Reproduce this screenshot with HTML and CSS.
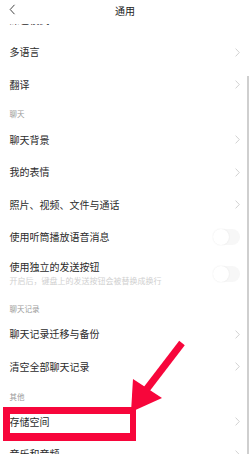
FILE: index.html
```html
<!DOCTYPE html>
<html lang="zh-CN">
<head>
<meta charset="utf-8">
<title>通用</title>
<link rel="stylesheet" href="styles.css">
</head>
<body>
<div class="screen">
  <header class="topbar">
    <svg class="back" width="7" height="11" viewBox="0 0 7 11"><path d="M5.5 0.8 L1.2 5.5 L5.5 10.2" fill="none" stroke="#444" stroke-width="1"/></svg>
    <div class="title">通用</div>
  </header>

  <main class="list">
    <div class="row"><span class="label">深色模式</span></div>
    <div class="row"><span class="label">多语言</span><svg class="chev" width="5" height="9" viewBox="0 0 5 9"><path d="M0.6 0.6 L4.3 4.5 L0.6 8.4" fill="none" stroke="#cdcdcd" stroke-width="0.9"/></svg></div>
    <div class="row"><span class="label">翻译</span><svg class="chev" width="5" height="9" viewBox="0 0 5 9"><path d="M0.6 0.6 L4.3 4.5 L0.6 8.4" fill="none" stroke="#cdcdcd" stroke-width="0.9"/></svg></div>

    <div class="section">聊天</div>
    <div class="row"><span class="label">聊天背景</span><svg class="chev" width="5" height="9" viewBox="0 0 5 9"><path d="M0.6 0.6 L4.3 4.5 L0.6 8.4" fill="none" stroke="#cdcdcd" stroke-width="0.9"/></svg></div>
    <div class="row"><span class="label">我的表情</span><svg class="chev" width="5" height="9" viewBox="0 0 5 9"><path d="M0.6 0.6 L4.3 4.5 L0.6 8.4" fill="none" stroke="#cdcdcd" stroke-width="0.9"/></svg></div>
    <div class="row"><span class="label">照片、视频、文件与通话</span><svg class="chev" width="5" height="9" viewBox="0 0 5 9"><path d="M0.6 0.6 L4.3 4.5 L0.6 8.4" fill="none" stroke="#cdcdcd" stroke-width="0.9"/></svg></div>
    <div class="row"><span class="label">使用听筒播放语音消息</span><span class="toggle"><span class="knob"></span></span></div>
    <div class="row row-double">
      <div class="texts">
        <span class="label">使用独立的发送按钮</span>
        <span class="sub">开启后，键盘上的发送按钮会被替换成换行</span>
      </div>
      <span class="toggle"><span class="knob"></span></span>
    </div>

    <div class="section">聊天记录</div>
    <div class="row"><span class="label">聊天记录迁移与备份</span><svg class="chev" width="5" height="9" viewBox="0 0 5 9"><path d="M0.6 0.6 L4.3 4.5 L0.6 8.4" fill="none" stroke="#cdcdcd" stroke-width="0.9"/></svg></div>
    <div class="row"><span class="label">清空全部聊天记录</span><svg class="chev" width="5" height="9" viewBox="0 0 5 9"><path d="M0.6 0.6 L4.3 4.5 L0.6 8.4" fill="none" stroke="#cdcdcd" stroke-width="0.9"/></svg></div>

    <div class="section">其他</div>
    <div class="row row-marked"><span class="label">存储空间</span><svg class="chev" width="5" height="9" viewBox="0 0 5 9"><path d="M0.6 0.6 L4.3 4.5 L0.6 8.4" fill="none" stroke="#cdcdcd" stroke-width="0.9"/></svg><span class="highlight"></span></div>
    <div class="row"><span class="label">音乐和音频</span><svg class="chev" width="5" height="9" viewBox="0 0 5 9"><path d="M0.6 0.6 L4.3 4.5 L0.6 8.4" fill="none" stroke="#cdcdcd" stroke-width="0.9"/></svg></div>
  </main>

  <div class="scrollbar"></div>

  <svg class="arrow" width="250" height="454" viewBox="0 0 250 454">
    <line x1="182" y1="343" x2="146" y2="390" stroke="#f7063b" stroke-width="7"/>
    <polygon points="133,379 162,398 131,412" fill="#f7063b"/>
  </svg>
</div>
</body>
</html>
```

FILE: styles.css
```css
html, body {
  margin: 0;
  padding: 0;
  background: #ffffff;
}

body {
  width: 250px;
  height: 454px;
  overflow: hidden;
  font-family: "Noto Sans CJK SC", "Noto Sans", sans-serif;
  color: #2b2b2b;
}

.screen {
  position: relative;
  width: 250px;
  height: 454px;
  overflow: hidden;
}

.topbar {
  position: absolute;
  top: 0;
  left: 0;
  right: 0;
  height: 23.5px;
  background: #ffffff;
  z-index: 2;
  display: flex;
  align-items: flex-start;
  justify-content: center;
}

.back {
  position: absolute;
  left: 9px;
  top: 4px;
}

.title {
  font-size: 10px;
  line-height: 21px;
  color: #222222;
}

.list {
  display: flex;
  flex-direction: column;
  padding-top: 3.25px;
}

.row {
  position: relative;
  height: 32.5px;
  flex: none;
  display: flex;
  align-items: center;
  justify-content: space-between;
  padding: 0 10px 0 9.5px;
}

.label {
  font-size: 10px;
  line-height: 12px;
  color: #2b2b2b;
  white-space: nowrap;
}

.chev {
  display: block;
  flex: none;
}

.section {
  height: 22.5px;
  flex: none;
  box-sizing: border-box;
  padding: 0 0 4px 9.5px;
  display: flex;
  align-items: flex-end;
  font-size: 7.5px;
  line-height: 10px;
  color: #9a9a9a;
}

.row-double {
  height: 42.25px;
}

.texts {
  display: flex;
  flex-direction: column;
  gap: 2px;
}

.sub {
  font-size: 8px;
  line-height: 12px;
  color: #d0d0d0;
  white-space: nowrap;
}

.toggle {
  position: relative;
  flex: none;
  width: 27px;
  height: 16px;
  border-radius: 8px;
  background: #f7f7f7;
}

.knob {
  position: absolute;
  left: 0;
  top: 0;
  width: 16px;
  height: 16px;
  border-radius: 50%;
  background: #ffffff;
  box-shadow: 0 0 2px rgba(0, 0, 0, 0.08);
}

.highlight {
  position: absolute;
  left: 3px;
  top: 1.75px;
  width: 133px;
  height: 34px;
  box-sizing: border-box;
  border: 7px solid #f7063b;
  border-right-width: 6px;
  border-bottom-width: 8px;
}

.scrollbar {
  position: absolute;
  left: 247px;
  top: 76px;
  bottom: 0;
  width: 1.5px;
  background: #cfcfcf;
  z-index: 3;
}

.arrow {
  position: absolute;
  left: 0;
  top: 0;
  z-index: 4;
  pointer-events: none;
}
```
